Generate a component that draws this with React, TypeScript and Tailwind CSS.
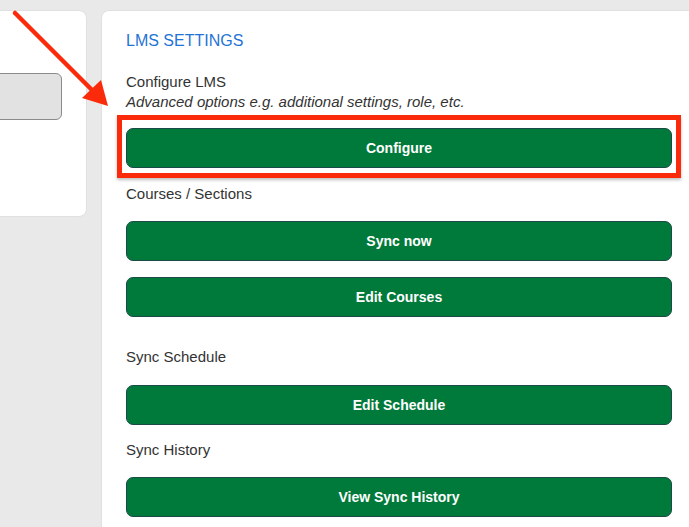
const font = { fontFamily: '"Liberation Sans", Arial, sans-serif' };

function GreenButton({ label }: { label: string }) {
  return (
    <button className="w-full h-10 rounded-[7px] border border-[#1c4b47] bg-[#007a3a] text-white text-[14px] font-bold">
      {label}
    </button>
  );
}

function Label({ children }: { children: React.ReactNode }) {
  return <div className="text-[15px] leading-5 text-[#333]">{children}</div>;
}

export default function App() {
  return (
    <div className="relative w-[689px] h-[527px] overflow-hidden bg-[#e9e9e9]" style={font}>
      <div className="flex items-start gap-[14px] pt-[10px]">
        {/* left card, cut off at the edge */}
        <div className="-ml-[13px] w-[100px] h-[207px] shrink-0 rounded-lg bg-white border border-[#e0e0e0] pr-6 pt-[62px]">
          <div className="h-[47px] rounded-md bg-[#e2e2e2] border border-[#8b8b8b]" />
        </div>

        {/* LMS settings card */}
        <div className="w-[596px] shrink-0 h-[540px] rounded-lg bg-white border border-[#e0e0e0] pl-6 pr-6 pt-[20px]">
          <h3 className="text-[16px] leading-5 text-[#1f74d6]">LMS SETTINGS</h3>

          <div className="mt-[21px]">
            <Label>Configure LMS</Label>
            <div className="text-[15px] leading-5 italic text-[#333]">Advanced options e.g. additional settings, role, etc.</div>
          </div>

          <div className="relative mt-4">
            <GreenButton label="Configure" />
            {/* annotation box */}
            <div className="absolute -left-[9px] -right-[9px] -top-[13px] -bottom-[10px] border-[5px] border-[#fa2a0a] shadow-[0_2px_3px_rgba(0,0,0,0.25)] pointer-events-none" />
          </div>

          <div className="mt-[16px]">
            <Label>Courses / Sections</Label>
          </div>
          <div className="mt-[17px] flex flex-col gap-4">
            <GreenButton label="Sync now" />
            <GreenButton label="Edit Courses" />
          </div>

          <div className="mt-[30px]">
            <Label>Sync Schedule</Label>
          </div>
          <div className="mt-[18px]">
            <GreenButton label="Edit Schedule" />
          </div>

          <div className="mt-[15px]">
            <Label>Sync History</Label>
          </div>
          <div className="mt-[17px]">
            <GreenButton label="View Sync History" />
          </div>
        </div>
      </div>

      {/* annotation arrow */}
      <svg className="absolute left-0 top-0 pointer-events-none" width="140" height="130" viewBox="0 0 140 130">
        <line x1="15" y1="13" x2="93" y2="91" stroke="#fa2a0a" strokeWidth="4.5" strokeLinecap="round" />
        <polygon points="108,106 82,98 101,80" fill="#fa2a0a" />
      </svg>
    </div>
  );
}
